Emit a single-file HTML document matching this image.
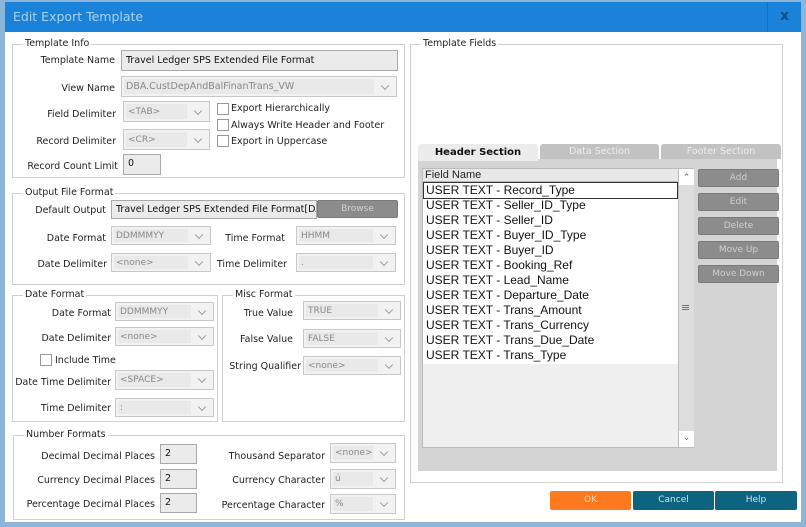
<!DOCTYPE html>
<html><head><meta charset="utf-8"><style>
*{box-sizing:border-box;margin:0;padding:0}
body{width:806px;height:527px;position:relative;background:#8cb5da;font-family:"DejaVu Sans","Liberation Sans",sans-serif;font-size:9.5px;color:#222;overflow:hidden}
.a{position:absolute}
#win{left:5px;top:2px;width:796px;height:520px;background:#fff}
#title{left:5px;top:2px;width:796px;height:30px;background:#1a82d8;color:#a9d2f2;font-size:12.5px;line-height:30px;padding-left:8px}
#close{left:767px;top:2px;width:34px;height:30px;border-left:1px solid #1670bb;color:#0e4f86;font-size:14px;font-weight:bold;text-align:center;line-height:28px}
.fs{position:absolute;border:1px solid #d0d0d0}
.lg{position:absolute;top:-7px;left:10px;background:#fff;padding:0 2px;font-size:9.5px;color:#222}
.lb{position:absolute;text-align:right;font-size:9.5px;white-space:nowrap}
.in{position:absolute;background:#ebebeb;border:1px solid #a9a9a9;font-size:9.5px;padding:3px 4px;white-space:nowrap;overflow:hidden}
.sel{position:absolute;background:#f2f2f2;border:1px solid #c8c8c8;font-size:9px;color:#888;padding:4px 4px 0;white-space:nowrap}
.sel::before{content:"";position:absolute;left:2px;top:2px;bottom:2px;right:22px;background:#e9e9e9;z-index:0}
.sel span{position:relative}
.sel::after{content:"";position:absolute;right:8px;top:50%;width:5px;height:5px;border-right:1px solid #999;border-bottom:1px solid #999;transform:translateY(-70%) rotate(45deg)}
.cb{position:absolute;width:12px;height:12px;border:1px solid #999;background:#fff}
.btn{position:absolute;background:#8c8c8c;color:#cfcfcf;font-size:9px;text-align:center;border-radius:2px;border:1px solid #7a7a7a}
.li{position:absolute;left:3px;font-family:"Liberation Sans",sans-serif;font-size:12px;color:#111;height:15px;line-height:15px}
</style></head><body>
<div id="win" class="a"></div>
<div id="title" class="a">Edit Export Template</div>
<div id="close" class="a">x</div>

<div class="fs" style="left:12px;top:44px;width:393px;height:134px"><div class="lg">Template Info</div></div>
<div class="lb" style="right:691px;top:55px">Template Name</div>
<div class="in" style="left:121px;top:50px;width:277px;height:21px;color:#111;padding-top:4px">Travel Ledger SPS Extended File Format</div>
<div class="lb" style="right:691px;top:83px">View Name</div>
<div class="sel" style="left:121px;top:76px;width:276px;height:21px;font-size:9.5px;padding-top:4px"><span>DBA.CustDepAndBalFinanTrans_VW</span></div>
<div class="lb" style="right:690px;top:109px">Field Delimiter</div>
<div class="sel" style="left:123px;top:101px;width:87px;height:21px;padding-top:5px"><span>&lt;TAB&gt;</span></div>
<div class="lb" style="right:690px;top:136px">Record Delimiter</div>
<div class="sel" style="left:123px;top:129px;width:87px;height:21px;padding-top:5px"><span>&lt;CR&gt;</span></div>
<div class="cb" style="left:217px;top:103px"></div><div class="lb" style="left:231px;top:103px">Export Hierarchically</div>
<div class="cb" style="left:217px;top:119px"></div><div class="lb" style="left:231px;top:120px">Always Write Header and Footer</div>
<div class="cb" style="left:217px;top:135px"></div><div class="lb" style="left:231px;top:136px">Export in Uppercase</div>
<div class="lb" style="right:688px;top:161px">Record Count Limit</div>
<div class="in" style="left:123px;top:154px;width:38px;height:21px;color:#111">0</div>

<div class="fs" style="left:12px;top:193px;width:393px;height:92px"><div class="lg">Output File Format</div></div>
<div class="lb" style="right:700px;top:205px">Default Output</div>
<div class="in" style="left:111px;top:200px;width:206px;height:19px;color:#111">Travel Ledger SPS Extended File Format[DA</div>
<div class="btn" style="left:317px;top:200px;width:81px;height:18px;line-height:16px">Browse</div>
<div class="lb" style="right:700px;top:233px">Date Format</div>
<div class="sel" style="left:111px;top:226px;width:100px;height:19px"><span>DDMMMYY</span></div>
<div class="lb" style="right:521px;top:233px">Time Format</div>
<div class="sel" style="left:296px;top:226px;width:100px;height:19px"><span>HHMM</span></div>
<div class="lb" style="right:699px;top:259px">Date Delimiter</div>
<div class="sel" style="left:111px;top:253px;width:100px;height:19px"><span>&lt;none&gt;</span></div>
<div class="lb" style="right:519px;top:259px">Time Delimiter</div>
<div class="sel" style="left:296px;top:253px;width:100px;height:19px"><span>.</span></div>

<div class="fs" style="left:12px;top:295px;width:206px;height:127px"><div class="lg">Date Format</div></div>
<div class="lb" style="right:695px;top:308px">Date Format</div>
<div class="sel" style="left:115px;top:302px;width:99px;height:19px"><span>DDMMMYY</span></div>
<div class="lb" style="right:695px;top:333px">Date Delimiter</div>
<div class="sel" style="left:115px;top:327px;width:99px;height:19px"><span>&lt;none&gt;</span></div>
<div class="cb" style="left:40px;top:354px"></div><div class="lb" style="left:55px;top:355px">Include Time</div>
<div class="lb" style="right:695px;top:377px">Date Time Delimiter</div>
<div class="sel" style="left:115px;top:370px;width:99px;height:20px"><span>&lt;SPACE&gt;</span></div>
<div class="lb" style="right:695px;top:403px">Time Delimiter</div>
<div class="sel" style="left:115px;top:398px;width:99px;height:19px"><span>:</span></div>

<div class="fs" style="left:222px;top:295px;width:183px;height:127px"><div class="lg">Misc Format</div></div>
<div class="lb" style="right:513px;top:308px">True Value</div>
<div class="sel" style="left:303px;top:301px;width:98px;height:19px"><span>TRUE</span></div>
<div class="lb" style="right:513px;top:334px">False Value</div>
<div class="sel" style="left:303px;top:329px;width:98px;height:19px"><span>FALSE</span></div>
<div class="lb" style="right:505px;top:361px">String Qualifier</div>
<div class="sel" style="left:303px;top:356px;width:98px;height:19px"><span>&lt;none&gt;</span></div>

<div class="fs" style="left:13px;top:435px;width:392px;height:85px"><div class="lg">Number Formats</div></div>
<div class="lb" style="right:651px;top:451px">Decimal Decimal Places</div>
<div class="in" style="left:160px;top:444px;width:37px;height:20px;color:#111">2</div>
<div class="lb" style="right:651px;top:475px">Currency Decimal Places</div>
<div class="in" style="left:160px;top:469px;width:37px;height:20px;color:#111">2</div>
<div class="lb" style="right:651px;top:499px">Percentage Decimal Places</div>
<div class="in" style="left:160px;top:493px;width:37px;height:20px;color:#111">2</div>
<div class="lb" style="right:481px;top:451px">Thousand Separator</div>
<div class="sel" style="left:330px;top:443px;width:66px;height:20px"><span>&lt;none&gt;</span></div>
<div class="lb" style="right:481px;top:475px">Currency Character</div>
<div class="sel" style="left:330px;top:469px;width:66px;height:20px"><span>ú</span></div>
<div class="lb" style="right:481px;top:500px">Percentage Character</div>
<div class="sel" style="left:330px;top:494px;width:66px;height:20px"><span>%</span></div>

<div class="fs" style="left:410px;top:44px;width:373px;height:439px"><div class="lg">Template Fields</div></div>
<div class="a" style="left:418px;top:159px;width:359px;height:312px;background:#d4d4d4"></div>
<div class="a" style="left:418px;top:144px;width:120px;height:17px;background:#ececec;border-radius:3px 3px 0 0;font-weight:bold;font-size:10px;text-align:center;line-height:17px;color:#111">Header Section</div>
<div class="a" style="left:540px;top:144px;width:119px;height:15px;background:#c2c2c2;border-radius:3px 3px 0 0;text-align:center;line-height:15px;color:#eee">Data Section</div>
<div class="a" style="left:661px;top:144px;width:120px;height:15px;background:#c2c2c2;border-radius:3px 3px 0 0;text-align:center;line-height:15px;color:#eee">Footer Section</div>
<div class="a" style="left:422px;top:168px;width:272px;height:280px;background:#efefef;border:1px solid #bbb">
 <div class="a" style="left:0;top:0;width:255px;height:13px;background:#e8e8e8;border-bottom:1px solid #bbb;font-family:'Liberation Sans',sans-serif;font-size:11px;padding-left:2px;line-height:13px">Field Name</div>
 <div class="a" style="left:0;top:13px;width:255px;height:182px;background:#fff"></div>
 <div class="a" style="left:0;top:13px;width:255px;height:17px;border:1px solid #333"></div>
 <div class="li" style="top:14px">USER TEXT - Record_Type</div>
 <div class="li" style="top:29px">USER TEXT - Seller_ID_Type</div>
 <div class="li" style="top:44px">USER TEXT - Seller_ID</div>
 <div class="li" style="top:59px">USER TEXT - Buyer_ID_Type</div>
 <div class="li" style="top:74px">USER TEXT - Buyer_ID</div>
 <div class="li" style="top:89px">USER TEXT - Booking_Ref</div>
 <div class="li" style="top:104px">USER TEXT - Lead_Name</div>
 <div class="li" style="top:119px">USER TEXT - Departure_Date</div>
 <div class="li" style="top:134px">USER TEXT - Trans_Amount</div>
 <div class="li" style="top:149px">USER TEXT - Trans_Currency</div>
 <div class="li" style="top:164px">USER TEXT - Trans_Due_Date</div>
 <div class="li" style="top:179px">USER TEXT - Trans_Type</div>
 <div class="a" style="left:255px;top:0;width:16px;height:278px;background:#ddd;border-left:1px solid #bbb"></div>
 <div class="a" style="left:256px;top:0;width:15px;height:16px;background:#fff;color:#666;text-align:center;font-size:9px;line-height:18px">&#8963;</div>
 <div class="a" style="left:256px;top:262px;width:15px;height:16px;background:#fff;color:#666;text-align:center;font-size:9px;line-height:14px">&#8964;</div>
 <div class="a" style="left:258px;top:132px;color:#666;font-size:11px">&#8801;</div>
</div>
<div class="btn" style="left:698px;top:169px;width:81px;height:18px;line-height:16px">Add</div>
<div class="btn" style="left:698px;top:193px;width:81px;height:18px;line-height:16px">Edit</div>
<div class="btn" style="left:698px;top:217px;width:81px;height:18px;line-height:16px">Delete</div>
<div class="btn" style="left:698px;top:241px;width:81px;height:18px;line-height:16px">Move Up</div>
<div class="btn" style="left:698px;top:265px;width:81px;height:18px;line-height:16px">Move Down</div>

<div class="a" style="left:550px;top:491px;width:81px;height:19px;background:#ff7a1f;border-radius:2px;color:#ffd6b8;text-align:center;line-height:19px;font-size:9px">OK</div>
<div class="a" style="left:633px;top:491px;width:81px;height:19px;background:#0d6480;border-radius:2px;color:#cfe3ea;text-align:center;line-height:19px;font-size:9px">Cancel</div>
<div class="a" style="left:715px;top:491px;width:82px;height:19px;background:#0d6480;border-radius:2px;color:#cfe3ea;text-align:center;line-height:19px;font-size:9px">Help</div>
</body></html>
